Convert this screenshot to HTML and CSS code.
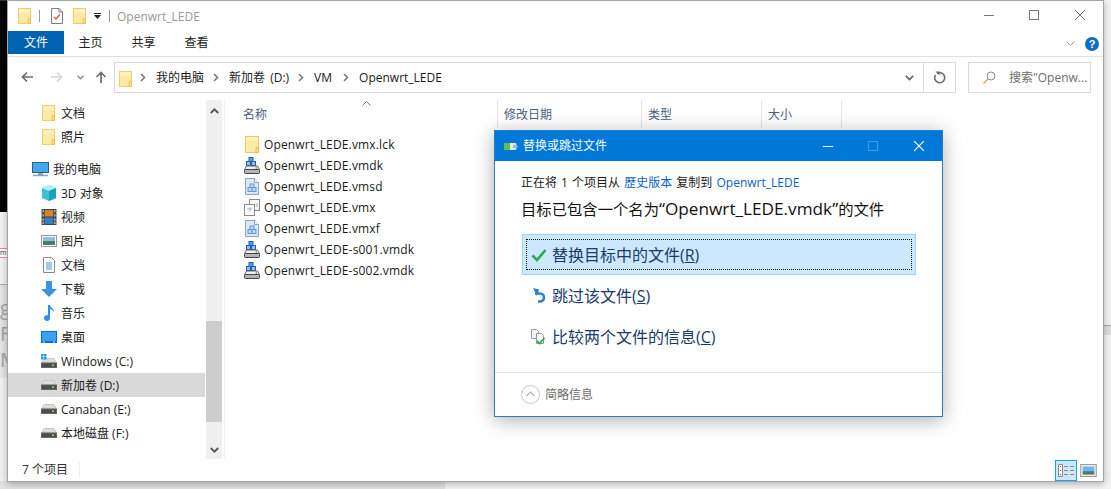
FILE: index.html
```html
<!DOCTYPE html>
<html lang="zh-CN">
<head>
<meta charset="utf-8">
<title>Openwrt_LEDE</title>
<link rel="stylesheet" href="styles.css">
</head>
<body>
<svg class="defs" width="0" height="0" aria-hidden="true">
  <defs>
    <symbol id="folder" viewBox="0 0 14 17">
      <rect x=".5" y=".5" width="13" height="16" fill="#ffeaa3" stroke="#eccb62"/>
      <rect x="1" y="1" width="12" height="4" fill="#fff0bc"/>
      <path d="M11 11.500h2.500v5H11z" fill="#ffe38a" stroke="#e9be48"/>
    </symbol>
    <symbol id="drive" viewBox="0 0 16 10">
      <path d="M3 .5h10l2.500 4.500H.5z" fill="#dcdcdc" stroke="#c6c6c6"/>
      <rect x=".5" y="5" width="15" height="4.500" fill="#4d4d4d" stroke="#666"/>
      <rect x="11" y="6.500" width="2" height="1.500" fill="#86d676"/>
    </symbol>
    <symbol id="vmdk" viewBox="0 0 16 17">
      <rect x="5" y=".5" width="4" height="4" fill="#5aa0e6" stroke="#1f5fae"/>
      <rect x="2.500" y="4.500" width="4" height="4" fill="#8fc1f0" stroke="#1f5fae"/>
      <rect x="7.500" y="4.500" width="4" height="4" fill="#8fc1f0" stroke="#1f5fae"/>
      <path d="M2.500 9h11l2 3.500H.5z" fill="#f0f0f0" stroke="#666"/>
      <rect x=".5" y="12.500" width="15" height="4" rx="1" fill="#b5b5b5" stroke="#444"/>
      <path d="M11 11l2-1v2z" fill="#4aa04a"/>
    </symbol>
    <symbol id="vmsd" viewBox="0 0 14 17">
      <path d="M.5.500h9l4 4v12H.5z" fill="#dbe9f6" stroke="#8fa3b7"/>
      <path d="M9.500.500v4h4" fill="#fff" stroke="#8fa3b7"/>
      <rect x="5" y="6" width="4" height="4" fill="#bcd8f2" stroke="#5f9bd6"/>
      <rect x="3" y="9.500" width="4" height="4" fill="#bcd8f2" stroke="#5f9bd6"/>
      <rect x="7" y="9.500" width="4" height="4" fill="#bcd8f2" stroke="#5f9bd6"/>
    </symbol>
    <symbol id="vmx" viewBox="0 0 16 17">
      <rect x="5.500" y=".5" width="10" height="11" fill="#f6f6f6" stroke="#8a8a8a"/>
      <rect x=".5" y="5.500" width="10" height="11" fill="#fff" stroke="#8a8a8a"/>
      <path d="M3 10h5M6 8v5M13 4v4" fill="none" stroke="#a8b4bf"/>
    </symbol>
    <symbol id="chev" viewBox="0 0 6 9">
      <path d="M1 1l3.500 3.500L1 8" fill="none" stroke="#7a7a7a" stroke-width="1.600"/>
    </symbol>
  </defs>
</svg>

<div class="backdrop">
  <div class="bd-black"></div>
  <div class="bd-light">
    <div class="bd-red">m</div>
  </div>
  <div class="bd-gray">
    <span class="bd-letter">g</span>
    <span class="bd-letter">Fu</span>
    <span class="bd-letter">Mv</span>
  </div>
  <div class="bd-pale"></div>
</div>
<div class="bd-right"></div>
<div class="bd-bottom"></div>

<div class="window">
  <header class="titlebar">
    <svg class="ico-folder"><use href="#folder"/></svg>
    <span class="tb-sep"></span>
    <svg class="qa-doc" viewBox="0 0 12 16">
      <path d="M.5.500h7.500l3.500 3.500v11.500H.5z" fill="#fff" stroke="#7d7d7d"/>
      <path d="M8 .5v3.500h3.500" fill="none" stroke="#7d7d7d"/>
      <path d="M3 9l2 2 4-4.500" fill="none" stroke="#e0552a" stroke-width="1.300"/>
    </svg>
    <svg class="ico-folder qa-folder"><use href="#folder"/></svg>
    <svg class="qa-drop" viewBox="0 0 7 6"><path d="M0 0h7v1H0zM0 2h7L3.500 6z" fill="#222"/></svg>
    <span class="tb-sep"></span>
    <span class="tb-title">Openwrt_LEDE</span>
    <div class="win-ctrls">
      <svg class="ctrl" viewBox="0 0 10 10"><path d="M0 5.500h10" stroke="#777" fill="none"/></svg>
      <svg class="ctrl ctrl-max" viewBox="0 0 10 10"><rect x=".5" y=".5" width="9" height="9" fill="none" stroke="#777"/></svg>
      <svg class="ctrl" viewBox="0 0 10 10"><path d="M0 0l10 10M10 0L0 10" stroke="#777" fill="none"/></svg>
    </div>
  </header>

  <nav class="ribbon">
    <span class="tab tab-file">文件</span>
    <span class="tab">主页</span>
    <span class="tab">共享</span>
    <span class="tab">查看</span>
    <svg class="rb-chev" viewBox="0 0 9 5"><path d="M.5.500l4 4 4-4" fill="none" stroke="#9a9a9a"/></svg>
    <span class="help">?</span>
  </nav>

  <div class="toolbar">
    <svg class="arrow" viewBox="0 0 12 12"><path d="M12 6H1.500M6 1.500L1.500 6 6 10.500" fill="none" stroke="#6d6d6d" stroke-width="1.700"/></svg>
    <svg class="arrow arrow-fwd" viewBox="0 0 12 12"><path d="M0 6h10.500M6 1.500L10.500 6 6 10.500" fill="none" stroke="#d6d6d6" stroke-width="1.700"/></svg>
    <svg class="arrow-down" viewBox="0 0 7 5"><path d="M.5.800l3 3 3-3" fill="none" stroke="#8a8a8a" stroke-width="1.300"/></svg>
    <svg class="arrow arrow-up" viewBox="0 0 12 12"><path d="M6 12V1.500M1.500 6L6 1.500 10.500 6" fill="none" stroke="#6d6d6d" stroke-width="1.700"/></svg>
    <div class="address">
      <svg class="ico-folder ad-folder"><use href="#folder"/></svg>
      <svg class="crumb-chev"><use href="#chev"/></svg>
      <span class="crumb">我的电脑</span>
      <svg class="crumb-chev"><use href="#chev"/></svg>
      <span class="crumb crumb-vol">新加卷 (D:)</span>
      <svg class="crumb-chev"><use href="#chev"/></svg>
      <span class="crumb crumb-vm">VM</span>
      <svg class="crumb-chev"><use href="#chev"/></svg>
      <span class="crumb">Openwrt_LEDE</span>
      <svg class="ad-drop" viewBox="0 0 9 6"><path d="M.8.800l3.700 3.700L8.200.8" fill="none" stroke="#666" stroke-width="1.700"/></svg>
      <span class="ad-refresh">
        <svg class="refresh" viewBox="0 0 12 13"><path d="M3 2.500a5 5 0 1 1-1.500 1.500" fill="none" stroke="#6d6d6d" stroke-width="1.600"/><path d="M1.500 .5h4v4z" fill="#6d6d6d"/></svg>
      </span>
    </div>
    <div class="search">
      <svg class="lens" viewBox="0 0 13 13"><circle cx="8" cy="5" r="4" fill="none" stroke="#8a8a8a"/><path d="M5 8l-4.500 4.500" stroke="#d8a060" stroke-width="1.200"/></svg>
      <span>搜索"Openw...</span>
    </div>
  </div>

  <div class="main">
    <aside class="nav">
      <ul class="nav-group">
        <li class="nav-item"><svg class="ni ni-folder"><use href="#folder"/></svg>文档</li>
        <li class="nav-item"><svg class="ni ni-folder"><use href="#folder"/></svg>照片</li>
      </ul>
      <ul class="nav-group">
        <li class="nav-item nav-root">
          <svg class="ni-pc" viewBox="0 0 17 15"><rect x=".5" y=".5" width="16" height="10" fill="#3fa9ea" stroke="#3a5a78"/><path d="M6 11h5v2H6z" fill="#8aa"/><path d="M1 13.500h15" stroke="#7fa6c4" stroke-width="1.500"/></svg>我的电脑
        </li>
        <li class="nav-item"><svg class="ni" viewBox="0 0 16 16"><path d="M8 0l7 3v10l-7 3-7-3V3z" fill="#39c4d6"/><path d="M1 3l7 3 7-3-7-3z" fill="#b8f0f5"/><path d="M8 6l7-3v10l-7 3z" fill="#1d9fc0"/></svg>3D 对象</li>
        <li class="nav-item"><svg class="ni" viewBox="0 0 14 15"><rect width="14" height="15" fill="#444"/><rect x="3" y="1" width="8" height="6" fill="#d8842a"/><rect x="3" y="8" width="8" height="6" fill="#3a7ec8"/><path d="M1 1h1v2H1zM1 5h1v2H1zM1 9h1v2H1zM1 12h1v2H1zM12 1h1v2h-1zM12 5h1v2h-1zM12 9h1v2h-1zM12 12h1v2h-1z" fill="#ddd"/></svg>视频</li>
        <li class="nav-item"><svg class="ni" viewBox="0 0 16 12"><rect x=".5" y=".5" width="15" height="11" fill="#fff" stroke="#9a9a9a"/><rect x="2" y="2" width="12" height="4" fill="#8cc0ea"/><rect x="2" y="6" width="12" height="4" fill="#4f7a68"/></svg>图片</li>
        <li class="nav-item"><svg class="ni" viewBox="0 0 12 16"><path d="M.5.500h8l3 3v12H.5z" fill="#fff" stroke="#8a8a8a"/><path d="M3 6h6M3 8h6M3 10h6M3 12h6" stroke="#3c98e0"/></svg>文档</li>
        <li class="nav-item"><svg class="ni" viewBox="0 0 16 16"><path d="M5 0h6v8h5l-8 8-8-8h5z" fill="#3c92e0"/></svg>下载</li>
        <li class="nav-item"><svg class="ni" viewBox="0 0 12 16"><path d="M5 0h2c.500 3 4 3 4 7-1-2-2-2.500-4-3v9a3 3 0 1 1-2-2.800z" fill="#2f8fe6"/></svg>音乐</li>
        <li class="nav-item"><svg class="ni" viewBox="0 0 16 12"><rect width="16" height="12" fill="#0f6fc6"/><rect x="1" y="1" width="14" height="9" fill="#3aa2f0"/><path d="M2 11h2M12 11h2" stroke="#cfe6f9"/></svg>桌面</li>
        <li class="nav-item"><svg class="ni" viewBox="0 0 16 14"><use href="#drive" y="4" height="10" width="16"/><path d="M0 0h2.500v2.500H0zM3 0h2.500v2.500H3zM0 3h2.500v2.500H0zM3 3h2.500v2.500H3z" fill="#1e9be8"/></svg>Windows (C:)</li>
        <li class="nav-item is-selected"><svg class="ni ni-drive"><use href="#drive"/></svg>新加卷 (D:)</li>
        <li class="nav-item"><svg class="ni ni-drive"><use href="#drive"/></svg>Canaban (E:)</li>
        <li class="nav-item"><svg class="ni ni-drive"><use href="#drive"/></svg>本地磁盘 (F:)</li>
      </ul>
    </aside>
    <div class="scroll">
      <svg class="sc-arrow" viewBox="0 0 9 6"><path d="M.8 5L4.500 1.300 8.200 5" fill="none" stroke="#555" stroke-width="1.800"/></svg>
      <div class="sc-thumb"></div>
      <svg class="sc-arrow" viewBox="0 0 9 6"><path d="M.8 1l3.700 3.700L8.200 1" fill="none" stroke="#555" stroke-width="1.800"/></svg>
    </div>
    <section class="content">
      <svg class="sort-caret" viewBox="0 0 9 5"><path d="M.5 4.500l4-4 4 4" fill="none" stroke="#888"/></svg>
      <div class="cols">
        <span class="col col-name">名称</span>
        <span class="col col-date">修改日期</span>
        <span class="col col-type">类型</span>
        <span class="col col-size">大小</span>
      </div>
      <ul class="files">
        <li class="file"><svg class="fi fi-folder"><use href="#folder"/></svg>Openwrt_LEDE.vmx.lck</li>
        <li class="file"><svg class="fi"><use href="#vmdk"/></svg>Openwrt_LEDE.vmdk</li>
        <li class="file"><svg class="fi"><use href="#vmsd"/></svg>Openwrt_LEDE.vmsd</li>
        <li class="file"><svg class="fi"><use href="#vmx"/></svg>Openwrt_LEDE.vmx</li>
        <li class="file"><svg class="fi"><use href="#vmsd"/></svg>Openwrt_LEDE.vmxf</li>
        <li class="file"><svg class="fi"><use href="#vmdk"/></svg>Openwrt_LEDE-s001.vmdk</li>
        <li class="file"><svg class="fi"><use href="#vmdk"/></svg>Openwrt_LEDE-s002.vmdk</li>
      </ul>
    </section>
  </div>

  <footer class="status">
    <span class="status-text">7 个项目</span>
    <div class="views">
      <span class="view view-on">
        <svg class="view-ico" viewBox="0 0 17 13"><path d="M.5.500h4v12h-4z" fill="#fff" stroke="#888"/><path d="M2 2.500h1M2 6.500h1M2 10.500h1" stroke="#555"/><path d="M6 2.500h4M12 2.500h4M6 6.500h4M12 6.500h4M6 10.500h4M12 10.500h4" stroke="#888"/></svg>
      </span>
      <span class="view">
        <svg class="view-ico" viewBox="0 0 14 11"><rect x=".5" y=".5" width="13" height="10" fill="#fff" stroke="#999"/><rect x="2" y="2" width="10" height="4" fill="#74b4ec"/><rect x="2" y="6" width="10" height="3" fill="#4f7a68"/></svg>
      </span>
    </div>
  </footer>
</div>

<div class="dialog">
  <div class="dlg-title">
    <svg class="dlg-icon" viewBox="0 0 14 9"><rect y="1" width="6" height="7" fill="#5dc04a"/><rect x="6" y="1" width="6" height="7" fill="#e6e6e6"/><path d="M9 3h3V1.500L14 4.500 12 7.500V6H9z" fill="#8fb8dc"/></svg>
    <span class="dlg-name">替换或跳过文件</span>
    <svg class="dlg-ctrl" viewBox="0 0 10 10"><path d="M0 5.500h10" stroke="#fff" fill="none"/></svg>
    <svg class="dlg-ctrl dlg-max" viewBox="0 0 10 10"><rect x=".5" y=".5" width="9" height="9" fill="none" stroke="#3f9be6"/></svg>
    <svg class="dlg-ctrl" viewBox="0 0 10 10"><path d="M0 0l10 10M10 0L0 10" stroke="#fff" stroke-width="1.100" fill="none"/></svg>
  </div>
  <div class="dlg-body">
    <p class="dlg-line">正在将 1 个项目从 <a class="lnk">歷史版本</a> 复制到 <a class="lnk">Openwrt_LEDE</a></p>
    <p class="dlg-head">目标已包含一个名为<span class="head-latin">“Openwrt_LEDE.vmdk”</span>的文件</p>
    <div class="opts">
      <div class="opt is-focus">
        <div class="opt-in">
          <svg class="opt-ico" viewBox="0 0 16 14"><path d="M1.500 7.500l4.500 4.500L14.500 2" fill="none" stroke="#2fa84f" stroke-width="2.600"/></svg>
          <span>替换目标中的文件(<u>R</u>)</span>
        </div>
      </div>
      <div class="opt">
        <div class="opt-in">
          <svg class="opt-ico" viewBox="0 0 16 16"><path d="M4 5.500h5a4 4 0 0 1 0 8H7" fill="none" stroke="#2d7fd0" stroke-width="2.600"/><path d="M2 0l6 1.500L6 8z" fill="#2d7fd0"/></svg>
          <span>跳过该文件(<u>S</u>)</span>
        </div>
      </div>
      <div class="opt">
        <div class="opt-in">
          <svg class="opt-ico" viewBox="0 0 16 16"><path d="M.5.500h5l2 2v7h-7z" fill="#f4f4f4" stroke="#999"/><path d="M5.500 4.500h5l2 2v8h-7z" fill="#fff" stroke="#999"/><path d="M6 12l2.500 2.500 5-5.500" fill="none" stroke="#2fa84f" stroke-width="1.800"/></svg>
          <span>比较两个文件的信息(<u>C</u>)</span>
        </div>
      </div>
    </div>
  </div>
  <div class="dlg-foot">
    <svg class="foot-ico" viewBox="0 0 19 19"><circle cx="9.500" cy="9.500" r="9" fill="#fff" stroke="#c8c8c8"/><path d="M5.500 11l4-4 4 4" fill="none" stroke="#b4b4b4" stroke-width="1.200"/></svg>
    <span>简略信息</span>
  </div>
</div>
</body>
</html>
```
FILE: styles.css
```css
* { box-sizing: border-box; }
html, body { margin: 0; height: 100%; }
body {
  position: relative;
  width: 1111px;
  height: 489px;
  overflow: hidden;
  background: #f4f4f4;
  font: 12px/1.2 "Open Sans", "Noto Sans CJK SC", sans-serif;
  color: #1a1a1a;
}
ul { list-style: none; margin: 0; padding: 0; }
p { margin: 0; }
.defs { position: absolute; }

/* Desktop behind the window */
.backdrop {
  position: absolute; left: 0; top: 0; width: 30px; height: 489px;
  display: flex; flex-direction: column;
}
.bd-black { height: 212px; background: #050505; border-top: 1px solid #333; }
.bd-light { height: 73px; background: #f2f2f2; padding-top: 36px; border-bottom: 1px solid #a8a8a8; }
.bd-red { height: 10px; border: 1px solid #ee8a8a; border-left: 0; font-size: 7px; line-height: 8px; color: #333; background: #fff; }
.bd-gray { height: 93px; background: #e4e4e4; color: #a3a3a3; display: flex; flex-direction: column; font-size: 20px; line-height: 26px; padding-top: 10px; }
.bd-letter { display: block; white-space: nowrap; }
.bd-pale { flex: 1; background: #f1f1f1; }
.bd-right {
  position: absolute; left: 1103px; top: 325px; width: 8px; height: 10px;
  background: #dedede; border-top: 1px solid #a8a8a8;
}
.bd-bottom {
  position: absolute; left: 0; top: 481px; width: 445px; height: 8px; background: #e2e2e2;
}

/* Explorer window */
.window {
  position: absolute; left: 7px; top: 0; width: 1097px; height: 482px;
  display: flex; flex-direction: column;
  background: #fff;
  border: 1px solid #a4a4a4;
  box-shadow: 0 2px 7px rgba(0, 0, 0, .28);
}
.titlebar { height: 30px; display: flex; align-items: center; padding-left: 10px; flex: none; }
.ico-folder { width: 13px; height: 16px; flex: none; }
.tb-sep { width: 1px; height: 12px; background: #9b9b9b; margin: 0 7px 0 8px; }
.qa-doc { width: 12px; height: 16px; margin-left: 4px; }
.qa-folder { margin-left: 10px; }
.qa-drop { width: 7px; height: 6px; margin-left: 8px; }
.titlebar .qa-drop + .tb-sep { margin-left: 8px; }
.tb-title { color: #9a9a9a; padding-top: 2px; }
.win-ctrls { margin-left: auto; display: flex; gap: 35px; padding-right: 18px; margin-top: -2px; }
.ctrl { width: 10px; height: 10px; }
.ctrl-max { margin-right: 1px; }

.ribbon { height: 26px; flex: none; display: flex; align-items: flex-start; border-bottom: 1px solid #e0e0e0; position: relative; padding-right: 4px; }
.tab { height: 23px; width: 53px; padding-top: 2px; display: flex; align-items: center; justify-content: center; color: #222; }
.tab-file { width: 56px; background: #0063b1; color: #fff; }
.rb-chev { width: 9px; height: 5px; margin: 10px 10px 0 auto; }
.help {
  width: 14px; height: 14px; border-radius: 50%; background: #0a6fc8; color: #fff;
  font: bold 11px/14px "Liberation Sans", sans-serif; text-align: center; margin-top: 6px;
}

.toolbar { height: 43px; flex: none; display: flex; align-items: flex-start; padding: 5px 0 0 13px; }
.arrow { width: 12px; height: 12px; margin-top: 9px; flex: none; }
.arrow-fwd { margin-left: 18px; }
.arrow-down { width: 7px; height: 5px; margin: 13px 0 0 14px; flex: none; }
.arrow-up { margin-left: 11px; }
.address {
  width: 842px; height: 31px; margin-left: 7px; flex: none;
  border: 1px solid #d9d9d9;
  display: flex; align-items: center; padding-left: 4px;
}
.ad-folder { margin-top: 2px; margin-right: -1px; }
.crumb { padding-top: 2px; }
.crumb-vol { word-spacing: 2px; }
.crumb-vm { min-width: 20px; }
.crumb-chev { width: 6px; height: 9px; margin: 0 10px 0 9px; flex: none; }
.ad-drop { width: 9px; height: 6px; margin-left: auto; margin-right: 9px; }
.ad-refresh { width: 32px; height: 29px; border-left: 1px solid #d9d9d9; display: flex; align-items: center; justify-content: center; }
.refresh { width: 12px; height: 13px; }
.search {
  width: 123px; height: 31px; margin-left: 12px; flex: none;
  border: 1px solid #d9d9d9; display: flex; align-items: center; padding-left: 14px; color: #6d6d6d; white-space: nowrap; overflow: hidden;
}
.search span { padding-top: 2px; }
.lens { width: 13px; height: 13px; margin-right: 13px; flex: none; }

.main { flex: 1; min-height: 0; display: flex; }
.nav { width: 198px; flex: none; padding-top: 1px; }
.nav-group { margin-bottom: 8px; }
.nav-item { height: 24px; display: flex; align-items: center; padding: 2px 0 0 33px; width: 197px; color: #1a1a1a; white-space: nowrap; }
.nav-item svg { margin-top: -2px; }
.nav-root { padding-left: 24px; }
.is-selected { background: #d9d9d9; }
.ni { width: 16px; height: 16px; margin-right: 4px; flex: none; }
.ni-folder { width: 13px; margin-right: 6px; margin-left: 1px; }
.ni-drive { height: 10px; }
.ni-pc { width: 17px; height: 15px; margin-right: 4px; }

.scroll { width: 16px; flex: none; background: #f0f0f0; display: flex; flex-direction: column; align-items: center; }
.sc-arrow { width: 9px; height: 6px; margin: 8px 0 6px; flex: none; }
.sc-thumb { width: 16px; height: 101px; background: #cdcdcd; margin: 201px 0 17px; flex: none; }

.content { flex: 1; position: relative; margin-left: 2px; border-left: 1px solid #f0f0f0; }
.sort-caret { position: absolute; left: 137px; top: 1px; width: 9px; height: 5px; }
.cols { display: flex; height: 28px; color: #4c607a; }
.col { display: flex; align-items: center; border-right: 1px solid #e5e5e5; padding: 2px 0 0 6px; }
.col-name { width: 273px; padding-left: 18px; }
.col-date { width: 144px; }
.col-type { width: 120px; }
.col-size { width: 80px; }
.files { padding-top: 6px; }
.file { height: 21px; display: flex; align-items: center; padding: 2px 0 0 19px; color: #1a1a1a; white-space: nowrap; letter-spacing: .15px; }
.fi { width: 16px; height: 17px; margin: -2px 4px 0 0; flex: none; }
.fi-folder { width: 14px; margin: -2px 5px 0 1px; }

.status { height: 22px; flex: none; display: flex; align-items: center; color: #333; padding-left: 14px; }
.status-text { width: 58px; border-right: 1px solid #eee; height: 16px; line-height: 16px; }
.views { margin-left: auto; display: flex; align-items: center; padding-right: 4px; }
.view { width: 22px; height: 21px; display: flex; align-items: center; justify-content: center; }
.view-on { background: #cce8ff; border: 1px solid #26a0da; }
.view-ico { width: 17px; height: 13px; }

/* Copy dialog */
.dialog {
  position: absolute; left: 494px; top: 130px; width: 449px; height: 287px;
  display: flex; flex-direction: column;
  background: #fff; border: 1px solid #1f7fd0;
  box-shadow: 0 3px 18px rgba(0, 0, 0, .32);
}
.dlg-title { height: 30px; flex: none; background: #0078d7; color: #fff; display: flex; align-items: center; padding-left: 9px; }
.dlg-icon { width: 14px; height: 9px; margin-right: 5px; }
.dlg-name { margin-right: auto; }
.dlg-ctrl { width: 10px; height: 10px; margin-right: 35px; }
.dlg-max { margin-right: 36px; }
.dlg-ctrl:last-child { margin-right: 18px; }
.dlg-body { flex: 1; padding: 13px 27px 0 26px; }
.dlg-line { height: 17px; line-height: 17px; color: #1a1a1a; white-space: nowrap; word-spacing: 1px; }
.lnk { color: #0b63c5; }
.dlg-head { font-size: 15.33px; height: 22px; line-height: 22px; margin-top: 7px; color: #111; white-space: nowrap; }
.head-latin { font-size: 17.2px; }
.opts { margin: 14px 0 0 1px; width: 394px; }
.opt { height: 41px; border: 1px solid transparent; color: #003399; }
.opt-in { height: 31px; margin: 4px 3px; padding: 2px 0 0 4px; display: flex; align-items: center; font-size: 16px; border: 1px dotted transparent; white-space: nowrap; color: #1b3a6b; }
.is-focus { background: #cce8ff; border-color: #99d1ff; }
.is-focus .opt-in { border-color: #111; }
.opt-ico { width: 16px; height: 16px; margin: -2px 5px 0 0; flex: none; }
.dlg-foot { height: 44px; flex: none; border-top: 1px solid #e2e2e2; display: flex; align-items: center; padding-left: 26px; color: #6d6d6d; }
.dlg-foot span { padding-top: 2px; }
.foot-ico { width: 19px; height: 19px; margin-right: 5px; }
```
